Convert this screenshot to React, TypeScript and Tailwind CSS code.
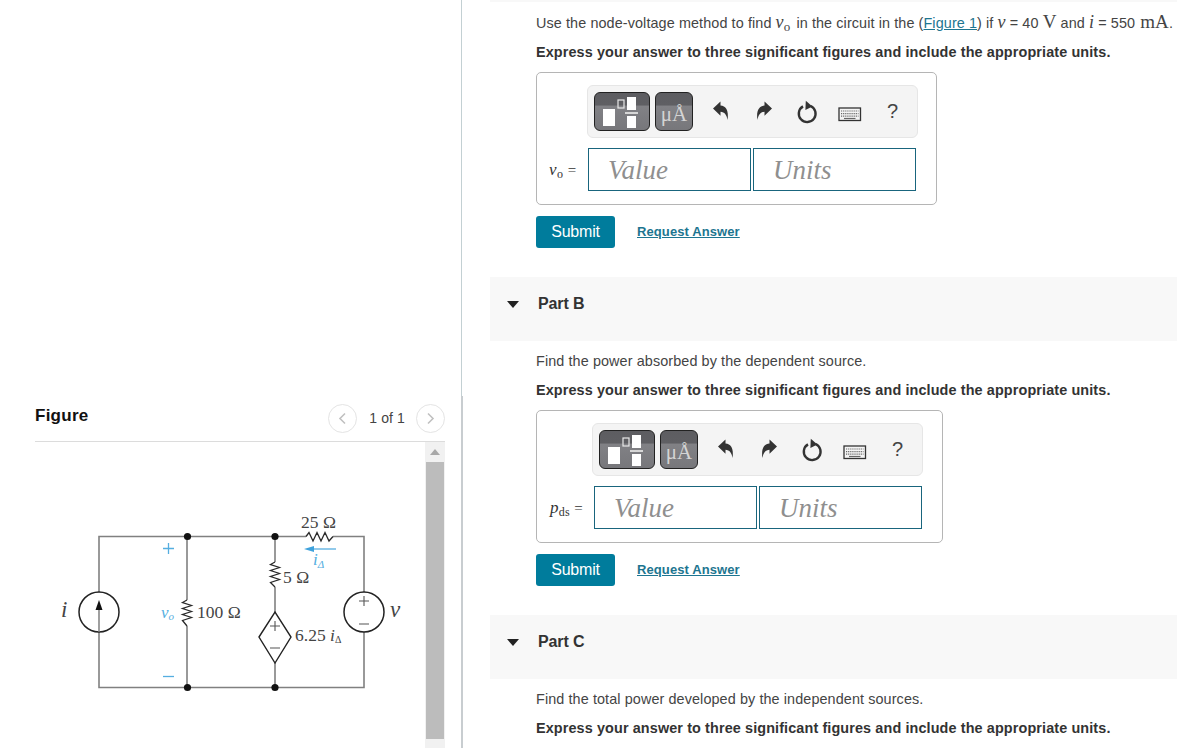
import React from "react";

const sans = "font-['Liberation_Sans',Arial,sans-serif]";
const serif = "font-['Liberation_Serif','Times_New_Roman',serif]";

function TemplateGlyph() {
  return (
    <svg width="56" height="38" viewBox="0 0 56 38" className="block">
      <rect x="8" y="16" width="12" height="17" fill="#fff" />
      <rect x="23" y="7" width="6" height="8" fill="none" stroke="#e8e8e8" strokeWidth="1.2" />
      <rect x="32" y="4" width="9" height="13" fill="#fff" />
      <rect x="30" y="19" width="13" height="2" fill="#d6d6d6" />
      <rect x="32" y="23" width="9" height="12" fill="#fff" />
    </svg>
  );
}

function ToolbarIcons() {
  return (
    <>
      <svg width="18" height="20" viewBox="0 0 18 20" className="absolute left-[124px] top-[15px]">
        <path d="M1 7.5 L8.5 0.5 V4.6 C13.5 4.8 17 8.8 15.6 19 C14.6 14 12.6 11 8.5 10.8 V14.8 Z" fill="#333" />
      </svg>
      <svg width="18" height="20" viewBox="0 0 18 20" className="absolute left-[167px] top-[15px]">
        <path d="M17 7.5 L9.5 0.5 V4.6 C4.5 4.8 1 8.8 2.4 19 C3.4 14 5.4 11 9.5 10.8 V14.8 Z" fill="#333" />
      </svg>
      <svg width="22" height="24" viewBox="0 0 22 24" className="absolute left-[208px] top-[14px]">
        <path d="M7 6.4 A8.4 8.4 0 1 0 14.6 6" fill="none" stroke="#333" strokeWidth="2.4" />
        <path d="M9.8 0.8 L16.4 6.4 L9.4 10 Z" fill="#333" />
      </svg>
      <svg width="24" height="15" viewBox="0 0 24 15" className="absolute left-[250px] top-[21px]">
        <rect x="1" y="1" width="21.5" height="12.5" fill="#f4f4f4" stroke="#333" strokeWidth="1.3" />
        <path d="M3 4 H20.5 M3 6.6 H20.5 M3 9.2 H20.5" stroke="#666" strokeWidth="1.2" strokeDasharray="1.2 0.9" />
        <path d="M6 11.5 H17.5" stroke="#666" strokeWidth="1.2" />
      </svg>
      <span className={`absolute left-[299px] top-[13px] text-[20px] leading-[24px] text-[#444] ${sans}`}>?</span>
    </>
  );
}

function AnswerBox({ label, sub, wide }: { label: string; sub: string; wide?: boolean }) {
  return (
    <div className={`h-[133px] rounded-[5px] border border-[#b5b5b5] bg-white ${wide ? "w-[407px] pl-[55px]" : "w-[401px] pl-[50px]"} pt-[12px]`}>
      <div className="relative h-[53px] w-[331px] rounded-[6px] border border-[#e6e6e6] bg-[#f4f4f4]">
        <div className="absolute left-[6px] top-[6px] h-[39px] w-[56px] overflow-hidden rounded-[6px] border border-[#222] bg-[linear-gradient(#5d5d61_0%,#5f5f63_32%,#818185_36%,#77777b_100%)]">
          <TemplateGlyph />
        </div>
        <div className={`absolute left-[67px] top-[6px] flex h-[39px] w-[38px] items-end justify-center rounded-[6px] border border-[#222] bg-[linear-gradient(#5d5d61_0%,#5f5f63_32%,#818185_36%,#77777b_100%)] pb-[4px] text-[21px] leading-[24px] text-[#d4d4d4] ${serif}`}>
          μÅ
        </div>
        <ToolbarIcons />
      </div>
      <div className={`mt-[10px] flex h-[43px] items-center ${wide ? "-ml-[45px]" : "-ml-[38px]"}`}>
        <span className={`${wide ? "w-[46px] pl-[3px] tracking-[0.3px]" : "w-[38px] tracking-[0.5px]"} shrink-0 whitespace-nowrap text-[15px] text-[#333] ${serif}`}>
          <i className="text-[17px]">{label}</i>
          <sub className="bottom-0 align-[-3px] text-[12px] leading-none">{sub}</sub> =
        </span>
        <div className={`ml-[1px] flex h-[43px] w-[163px] items-center border border-[#19657d] pl-[19px] pt-[1px] text-[27px] italic text-[#8f8f8f] ${serif}`}>Value</div>
        <div className={`ml-[2px] flex h-[43px] w-[163px] items-center border border-[#19657d] pl-[19px] pt-[1px] text-[27px] italic text-[#8f8f8f] ${serif}`}>Units</div>
      </div>
    </div>
  );
}

function Actions() {
  return (
    <div className="mt-[11px] flex h-[32px] items-center">
      <div className="flex h-[32px] w-[79px] items-center justify-center rounded-[3px] bg-[#007c9c] text-[16px] tracking-[-0.2px] text-white">Submit</div>
      <span className="ml-[22px] text-[13px] font-bold tracking-[0.1px] text-[#1d7590] underline">Request Answer</span>
    </div>
  );
}

function PartHeader({ name }: { name: string }) {
  return (
    <div className="flex h-[64px] items-center bg-[#f8f8f8] pb-[10px] pl-[17px]">
      <svg width="12" height="7" viewBox="0 0 12 7" className="block">
        <path d="M0 0 H12 L6 7 Z" fill="#222" />
      </svg>
      <span className="ml-[19px] text-[16px] font-bold tracking-[-0.1px] text-[#333]">{name}</span>
    </div>
  );
}

const Express = () => (
  <p className="h-[20px] text-[14.4px] font-bold leading-[20px] tracking-[0.12px] whitespace-nowrap text-[#333]">
    Express your answer to three significant figures and include the appropriate units.
  </p>
);

function Resistor({ d }: { d: string }) {
  return <path d={d} fill="none" stroke="#2a2a2a" strokeWidth="1.3" />;
}

function Circuit() {
  return (
    <svg width="390" height="306" viewBox="35 442 390 306" className="block">
      <g fill="none" stroke="#808080" strokeWidth="1.6">
        <path d="M99 592 V536.5 H306 M333 536.5 H364 V592 M364 632 V687.5 H99 V632" />
        <path d="M187 536.5 V600 M187 626 V687.5" />
        <path d="M275 536.5 V562 M275 587 V612 M275 663 V687.5" />
      </g>
      <circle cx="99" cy="612" r="20" fill="#fff" stroke="#222" strokeWidth="1.5" />
      <path d="M99 632 V606" stroke="#777" strokeWidth="1.4" />
      <path d="M99 600 L102.5 610 H95.5 Z" fill="#111" />
      <circle cx="364" cy="612" r="20" fill="#fff" stroke="#222" strokeWidth="1.5" />
      <path d="M259 637 L275 612 L291 637 L275 663 Z" fill="#fff" stroke="#222" strokeWidth="1.4" />
      <Resistor d="M275 562 L270.5 564.5 L279.5 567.5 L270.5 570.5 L279.5 573.5 L270.5 576.5 L279.5 579.5 L270.5 582.5 L275 587" />
      <Resistor d="M187 600 L182.5 602.5 L191.5 605.5 L182.5 608.5 L191.5 611.5 L182.5 614.5 L191.5 617.5 L182.5 620.5 L187 626" />
      <Resistor d="M306 536.5 L309 532.5 L313 541 L317 532.5 L321 541 L325 532.5 L329 541 L333 536.5" />
      <g fill="#111">
        <circle cx="187.5" cy="536.5" r="3.6" />
        <circle cx="275" cy="536.5" r="3.6" />
        <circle cx="187.5" cy="687.5" r="3.6" />
        <circle cx="275" cy="687.5" r="3.6" />
      </g>
      <g stroke="#55aee0" strokeWidth="1.3" fill="none">
        <path d="M163 548.5 H174 M168.5 543 V554" />
        <path d="M163 676.5 H174" />
        <path d="M312 549 H336" />
      </g>
      <path d="M304 549 L314 546 V552 Z" fill="#3fa2dc" />
      <path d="M359 601 H369 M364 596 V606 M359 624 H369" stroke="#555" strokeWidth="1.1" fill="none" />
      <path d="M270 626 H280 M275 621 V631 M270 648 H280" stroke="#555" strokeWidth="1.1" fill="none" />
      <g className={serif} fill="#444">
        <text x="301" y="528" fontSize="17.5">25 Ω</text>
        <text x="283" y="583" fontSize="17.5">5 Ω</text>
        <text x="197" y="618" fontSize="17.5">100 Ω</text>
        <text x="295" y="641" fontSize="17.5">6.25 <tspan fontStyle="italic">i</tspan><tspan fontSize="10" dy="2">Δ</tspan></text>
        <text x="61" y="617" fontSize="23" fontStyle="italic">i</text>
        <text x="390" y="617" fontSize="23" fontStyle="italic">v</text>
      </g>
      <g className={serif} fill="#55aee0" fontStyle="italic">
        <text x="161" y="618" fontSize="17">v<tspan fontSize="11" dy="2">o</tspan></text>
        <text x="313" y="565" fontSize="17">i<tspan fontSize="11" dy="3">Δ</tspan></text>
      </g>
    </svg>
  );
}

function FigurePanel() {
  return (
    <div className="h-[748px] w-[461px] shrink-0 pt-[405px]">
      <div className="ml-[35px] w-[410px]">
        <div className="flex h-[37px] border-b border-[#dcdcdc] pb-[1px]">
          <span className="pt-[1px] text-[17px] leading-[20px] font-bold tracking-[0.25px] text-[#111]">Figure</span>
          <div className="ml-auto flex h-[26px] items-center text-[14px] text-[#444]">
            <span className="flex h-[29px] w-[29px] items-center justify-center rounded-full border border-[#e4e4e4]">
              <svg width="9" height="13" viewBox="0 0 9 13"><path d="M7 1.5 L2 6.5 L7 11.5" fill="none" stroke="#c0c0c0" strokeWidth="1.6" /></svg>
            </span>
            <span className="ml-[12px] tracking-[0.1px]">1 of 1</span>
            <span className="ml-[11px] flex h-[29px] w-[29px] items-center justify-center rounded-full border border-[#e4e4e4]">
              <svg width="9" height="13" viewBox="0 0 9 13"><path d="M2 1.5 L7 6.5 L2 11.5" fill="none" stroke="#c0c0c0" strokeWidth="1.6" /></svg>
            </span>
          </div>
        </div>
        <div className="flex h-[306px]">
          <Circuit />
          <div className="flex w-[20px] flex-col bg-[#f1f1f1] px-[1px]">
            <div className="flex h-[20px] items-center justify-center">
              <svg width="10" height="6" viewBox="0 0 10 6"><path d="M5 0 L10 6 H0 Z" fill="#a8a8a8" /></svg>
            </div>
            <div className="h-[277px] bg-[#bcbcbc]" />
          </div>
        </div>
      </div>
    </div>
  );
}

function Divider() {
  return (
    <div className="flex h-[748px] w-[2px] shrink-0 flex-col">
      <div className="h-[396px] w-[1px] bg-[#c3d0d3]" />
      <div className="h-[352px] w-[2px] bg-[#c8cdd0]" />
    </div>
  );
}

export default function App() {
  const math = `text-[18px] leading-none ${serif}`;
  const bigMath = `text-[19px] leading-none ${serif}`;
  return (
    <div className={`flex h-[748px] w-[1177px] overflow-hidden bg-white ${sans}`}>
      <FigurePanel />
      <Divider />
      <div className="ml-[27px] w-[687px] shrink-0">
        <div className="h-[2px] bg-[#f8f8f8]" />
        <div className="pl-[46px] pt-[10px]">
          <p className="h-[20px] text-[14.4px] leading-[20px] tracking-[0.1px] whitespace-nowrap text-[#444]">
            Use the node-voltage method to find <span className={`${math} mr-[2px]`}><i>v</i><sub className="bottom-0 align-[-3px] text-[13px] leading-none">o</sub></span> in the circuit in the (<span className="text-[#1d7590] underline">Figure 1</span>) if <i className={math}>v</i> = 40 <span className={bigMath}>V</span> and <i className={math}>i</i> = 550 <span className={`${bigMath} ml-[1px]`}>mA</span>.
          </p>
          <div className="mt-[10px]"><Express /></div>
          <div className="mt-[10px]"><AnswerBox label="v" sub="o" /></div>
          <Actions />
        </div>
        <div className="mt-[29px]"><PartHeader name="Part B" /></div>
        <div className="pl-[46px] pt-[10px]">
          <p className="h-[20px] text-[14.4px] leading-[20px] tracking-[0.1px] text-[#444]">Find the power absorbed by the dependent source.</p>
          <div className="mt-[9px]"><Express /></div>
          <div className="mt-[10px]"><AnswerBox label="p" sub="ds" wide /></div>
          <Actions />
        </div>
        <div className="mt-[29px]"><PartHeader name="Part C" /></div>
        <div className="pl-[46px] pt-[10px]">
          <p className="h-[20px] text-[14.4px] leading-[20px] tracking-[0.1px] text-[#444]">Find the total power developed by the independent sources.</p>
          <div className="mt-[9px]"><Express /></div>
        </div>
      </div>
    </div>
  );
}
